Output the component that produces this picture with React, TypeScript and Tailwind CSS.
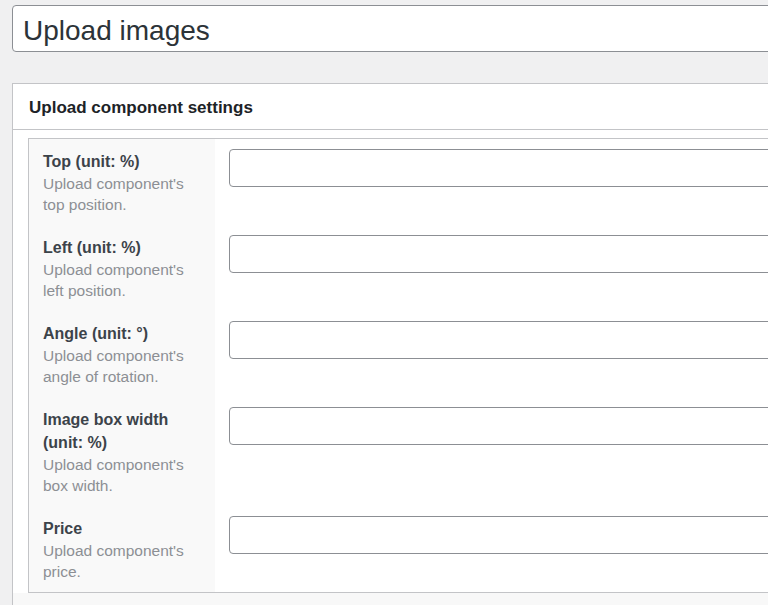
type Field = {
  label: string[];
  help: string[];
};

const fields: Field[] = [
  { label: ["Top (unit: %)"], help: ["Upload component's", "top position."] },
  { label: ["Left (unit: %)"], help: ["Upload component's", "left position."] },
  { label: ["Angle (unit: °)"], help: ["Upload component's", "angle of rotation."] },
  { label: ["Image box width", "(unit: %)"], help: ["Upload component's", "box width."] },
  { label: ["Price"], help: ["Upload component's", "price."] },
];

function FieldRow({ field }: { field: Field }) {
  return (
    <div className="grid grid-cols-[186px_1fr]">
      <div className="bg-[#f9f9f9] pl-[14px] pt-[11px] pb-[10px]">
        {field.label.map((l) => (
          <p key={l} className="text-[16px] leading-[23px] font-bold text-[#3c434a]">
            {l}
          </p>
        ))}
        {field.help.map((h) => (
          <p key={h} className="text-[15.5px] leading-[21px] text-[#8c8f94]">
            {h}
          </p>
        ))}
      </div>
      <div className="pl-[14px] pt-[10px]">
        <input
          type="text"
          className="block w-full h-[38px] rounded-[4px] border border-[#8c8f94] bg-white"
        />
      </div>
    </div>
  );
}

export default function App() {
  return (
    <div
      className="min-h-screen overflow-hidden bg-[#f0f0f1] pt-[5px] pl-[12px]"
      style={{ fontFamily: '"Liberation Sans", Arial, sans-serif' }}
    >
      <div className="w-[820px]">
        <div className="h-[47px] flex items-center rounded-[4px] border border-[#8c8f94] bg-white px-[10px] pt-[4px] text-[28px] text-[#2c3338]">
          Upload images
        </div>

        <div className="mt-[31px] border border-[#c3c4c7] bg-white">
          <div className="h-[46px] flex items-center border-b border-[#c3c4c7] px-[16px] pt-[2px] text-[17px] font-bold text-[#1d2327]">
            Upload component settings
          </div>
          <div className="pt-[8px] px-[15px]">
            <div className="border border-[#c3c4c7]">
              {fields.map((f) => (
                <FieldRow key={f.label[0]} field={f} />
              ))}
            </div>
          </div>
          <div className="h-[20px] bg-[#f8f8f8]" />
        </div>
      </div>
    </div>
  );
}
